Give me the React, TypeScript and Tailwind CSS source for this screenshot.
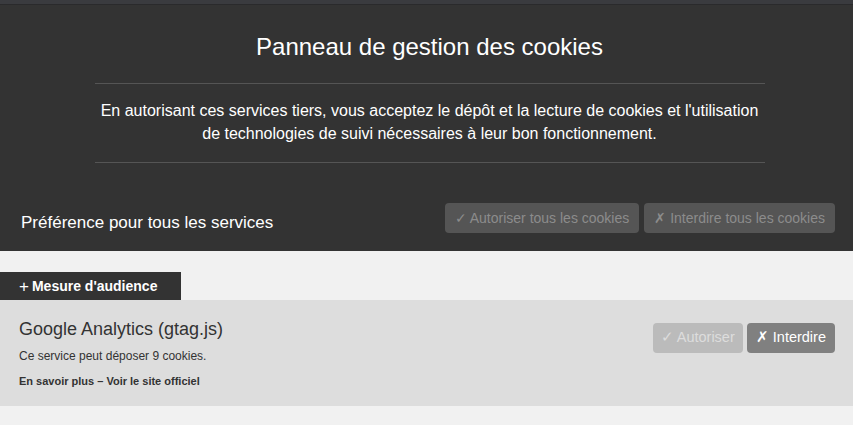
import React from 'react';

export default function App() {
  return (
    <div className="min-h-[425px] w-full bg-[#f1f1f1] font-['Liberation_Sans',Arial,sans-serif]">
      <div className="h-[5px] bg-[#3a3b3f] border-b border-[#2a2a2c]" />
      <div className="bg-[#333333] pt-[28px] pb-[18px]">
        <div className="pl-[6px]">
          <h1 className="text-center text-[24px] leading-[28px] text-white">Panneau de gestion des cookies</h1>
          <div className="mx-auto mt-[22px] w-[670px] border-t border-[#555555]" />
          <p className="mx-auto w-[670px] pt-[15px] pb-[17px] text-center text-[16px] leading-[23px] text-white">
            En autorisant ces services tiers, vous acceptez le dépôt et la lecture de cookies et l'utilisation de technologies de suivi nécessaires à leur bon fonctionnement.
          </p>
          <div className="mx-auto w-[670px] border-t border-[#555555]" />
        </div>
        <div className="mt-[40px] flex h-[30px] items-start justify-between pl-[21px] pr-[18px]">
          <span className="mt-[10px] text-[17px] leading-[20px] text-white">Préférence pour tous les services</span>
          <div className="flex gap-[5px]">
            <button className="h-[30px] rounded-[4px] bg-[#555555] px-[10px] text-[14px] text-[#8c8c8c]">✓ Autoriser tous les cookies</button>
            <button className="h-[30px] rounded-[4px] bg-[#555555] px-[10px] text-[14px] text-[#8c8c8c]">✗ Interdire tous les cookies</button>
          </div>
        </div>
      </div>
      <div className="pt-[21px]">
        <div className="flex h-[28px] w-[181px] items-center bg-[#333333] pl-[19px] text-[14px] font-bold text-white">
          <span className="mr-[3px] text-[17px] font-normal leading-none">+</span>Mesure d'audience
        </div>
        <div className="flex items-start justify-between bg-[#dddddd] pb-[18px] pl-[19px] pr-[18px] pt-[18px]">
          <div>
            <div className="text-[18px] leading-[22px] text-[#333333]">Google Analytics (gtag.js)</div>
            <div className="mt-[9px] text-[12px] leading-[14px] text-[#333333]">Ce service peut déposer 9 cookies.</div>
            <div className="mt-[12px] text-[11px] font-bold leading-[13px] text-[#333333]">En savoir plus – Voir le site officiel</div>
          </div>
          <div className="mt-[5px] flex gap-[4px]">
            <button className="h-[30px] rounded-[4px] bg-[#bbbbbb] px-[8px] text-[14.5px] text-[#dddddd]">✓ Autoriser</button>
            <button className="h-[30px] rounded-[4px] bg-[#808080] px-[9px] text-[14.5px] text-white">✗ Interdire</button>
          </div>
        </div>
      </div>
    </div>
  );
}
